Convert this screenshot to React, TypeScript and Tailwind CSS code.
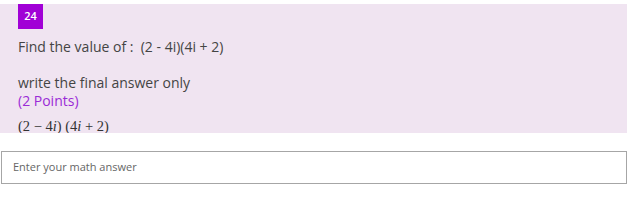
export default function App() {
  return (
    <div className="w-[637px] h-[207px] bg-white pt-[4px] font-['Segoe_UI','Open_Sans',sans-serif]">
      <div className="w-[627px] h-[129px] bg-[#f0e4f1] px-[18px] overflow-hidden">
        <div className="w-[25px] h-[25px] bg-[#a100d6] text-white text-[11px] font-semibold flex items-center justify-center">
          24
        </div>
        <div className="mt-[8px] text-[14px] leading-[20px] text-[#444]">
          Find the value of :&nbsp; (2 - 4i)(4i + 2)
        </div>
        <div className="mt-[17px] text-[14px] leading-[18px] text-[#444]">
          write the final answer only
        </div>
        <div className="text-[14px] leading-[18px] text-[#9a2bd6]">(2 Points)</div>
        <div className="mt-[6px] text-[14.5px] leading-[20px] text-[#333] font-['Liberation_Serif',serif]">
          (2 − 4<i>i</i>) (4<i>i</i> + 2)
        </div>
      </div>
      <div className="mt-[18px] ml-[1px] w-[626px] h-[33px] border border-[#a6a6a6] flex items-center px-[11px]">
        <span className="text-[11px] text-[#666]">Enter your math answer</span>
      </div>
    </div>
  );
}
